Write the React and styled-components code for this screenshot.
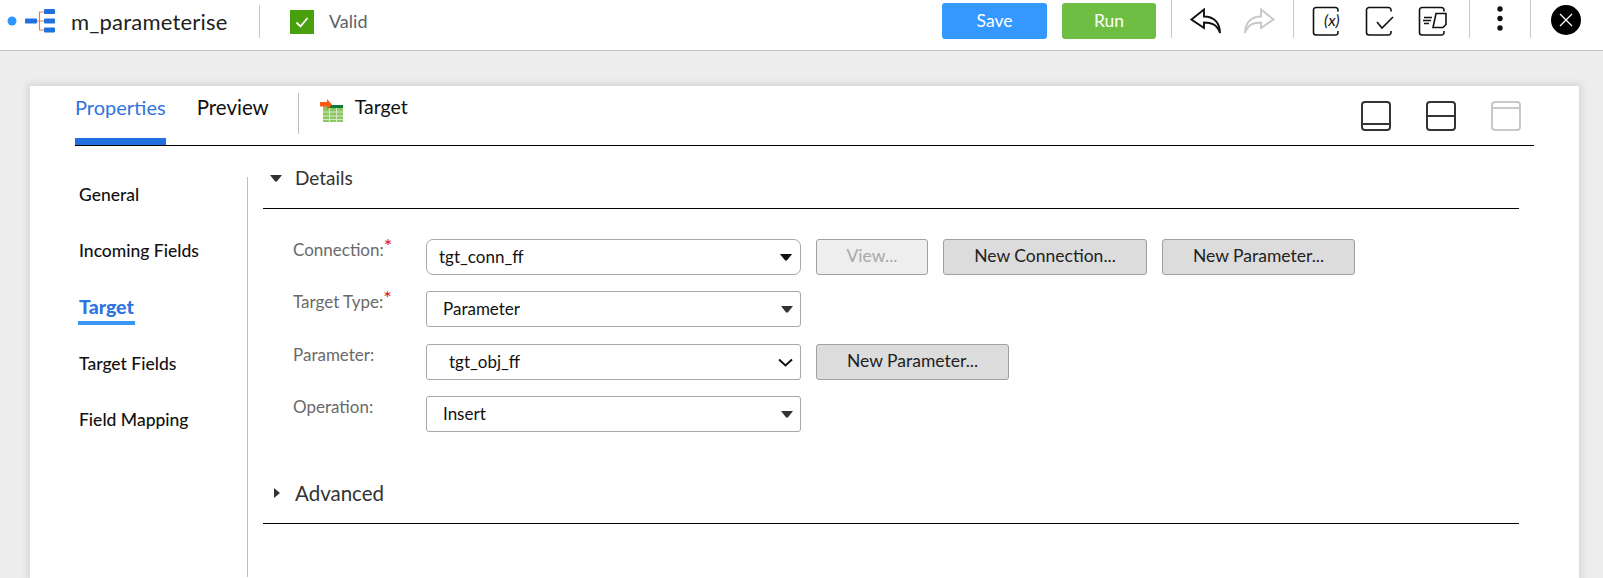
import React from "react";
import styled, { createGlobalStyle } from "styled-components";

const Global = createGlobalStyle`
  html, body { margin: 0; padding: 0; background: #ededed; }
  body { font-family: "Lato", "Open Sans", sans-serif; height: 578px; overflow: hidden; }
  * { box-sizing: border-box; }
`;

const Page = styled.div`
  width: 1603px;
  height: 578px;
  overflow: hidden;
  background: #ededed;
`;

const Header = styled.header`
  height: 51px;
  padding-right: 22px;
  background: #fff;
  border-bottom: 1px solid #c4c4c4;
  display: flex;
  align-items: flex-start;
`;

const Brand = styled.div`
  width: 259px;
  height: 50px;
  padding: 0 0 8px 7px;
  display: flex;
  align-items: center;
  gap: 5px;
`;

const Title = styled.h1`
  margin: 0 0 0 10px;
  font-size: 22px;
  font-weight: 400;
  color: #222;
  letter-spacing: 0.2px;
`;

const HeaderRule = styled.div`
  width: 1px;
  height: ${(p) => p.$h || 38}px;
  margin-top: ${(p) => p.$top || 0}px;
  background: #c8c8c8;
  flex: none;
`;

const Status = styled.div`
  display: flex;
  align-items: center;
  height: 44px;
  margin-left: 30px;
  flex: 1;
`;

const CheckBox = styled.span`
  width: 24px;
  height: 24px;
  background: #48a00e;
  display: flex;
  align-items: center;
  justify-content: center;
`;

const StatusText = styled.span`
  margin-left: 15px;
  padding-bottom: 2px;
  font-size: 18px;
  color: #5a6268;
`;

const ActionButton = styled.button`
  width: ${(p) => p.$w}px;
  height: 36px;
  margin: 3px ${(p) => p.$mr}px 0 0;
  padding: 0 0 2px;
  border: none;
  border-radius: 3px;
  background: ${(p) => p.$bg};
  color: #fff;
  font: 400 17.5px "Lato", sans-serif;
`;

const IconGroup = styled.div`
  display: flex;
  align-items: flex-start;
  gap: ${(p) => p.$gap}px;
  padding: ${(p) => p.$top}px ${(p) => p.$right}px 0 ${(p) => p.$left}px;
`;

const CloseButton = styled.div`
  width: 30px;
  height: 30px;
  margin: 5px 0 0 20px;
  border-radius: 50%;
  background: #000;
  display: flex;
  align-items: center;
  justify-content: center;
`;

const Main = styled.main`
  padding: 35px 24px 0 30px;
`;

const Panel = styled.section`
  width: 1549px;
  height: 492px;
  background: #fff;
  box-shadow: 0 0 6px 3px #d9d9d9;
  padding: 0 45px;
`;

const TabBar = styled.div`
  height: 60px;
  border-bottom: 1px solid #000;
  display: flex;
  align-items: flex-start;
`;

const Tab = styled.div`
  height: 59px;
  padding-top: 8px;
  margin-right: ${(p) => p.$mr}px;
  font-size: ${(p) => p.$size || 20}px;
  line-height: 26px;
  color: ${(p) => (p.$active ? "#2f74e0" : "#111")};
  border-bottom: 7px solid ${(p) => (p.$active ? "#2070e0" : "transparent")};
`;

const TabRule = styled.div`
  width: 1px;
  height: 41px;
  margin: 7px 21px 0 0;
  background: #bdbdbd;
`;

const ObjectLabel = styled.div`
  flex: 1;
  display: flex;
  align-items: flex-start;
  gap: 12px;
  padding-top: 11px;
  font-size: 19.5px;
  line-height: 19px;
  color: #111;
`;

const PaneIcons = styled.div`
  display: flex;
  gap: 35px;
  padding: 15px 13px 0 0;
`;

const Body = styled.div`
  display: flex;
  height: 431px;
`;

const SideNav = styled.nav`
  width: 172px;
  padding: 37px 0 0 4px;
  display: flex;
  flex-direction: column;
  flex: none;
`;

const NavItem = styled.div`
  height: 56.2px;
  flex: none;
  font-size: ${(p) => (p.$active ? 19.5 : 17.5)}px;
  font-weight: ${(p) => (p.$active ? 900 : 500)};
  color: ${(p) => (p.$active ? "#2f74e0" : "#111")};
  line-height: 24px;
  & > span {
    display: inline-block;
    padding: 0 ${(p) => (p.$active ? 1 : 0)}px 2px;
    margin-left: ${(p) => (p.$active ? -1 : 0)}px;
    border-bottom: ${(p) => (p.$active ? "4px solid #3a96f5" : "none")};
  }
`;

const Content = styled.div`
  flex: 1;
  margin-top: 31px;
  border-left: 1px solid #bdbdbd;
  padding-left: 15px;
`;

const SectionHead = styled.div`
  width: 1256px;
  height: ${(p) => p.$h}px;
  margin-top: ${(p) => p.$top}px;
  border-bottom: 1px solid #000;
  display: flex;
  align-items: flex-start;
  font-size: ${(p) => p.$size}px;
  line-height: 26px;
  color: #333;
`;

const CaretSlot = styled.span`
  width: 32px;
  height: 26px;
  display: flex;
  align-items: center;
  padding-left: ${(p) => p.$pad}px;
`;

const Form = styled.div`
  padding: 30px 0 0 30px;
  height: 253px;
  display: flex;
  flex-direction: column;
`;

const Row = styled.div`
  display: flex;
  height: 36px;
  margin-bottom: ${(p) => p.$after || 0}px;
`;

const Label = styled.label`
  width: 133px;
  font-size: 17px;
  line-height: 22px;
  color: #6a6a6a;
  flex: none;
`;

const Required = styled.span`
  color: #e01010;
  font-size: 20px;
  line-height: 16px;
  position: relative;
  top: -3px;
`;

const Select = styled.div`
  width: 375px;
  height: 36px;
  border: 1px solid #a8a8a8;
  border-radius: ${(p) => (p.$round ? 7 : 3)}px;
  padding: 0 7px 0 ${(p) => p.$pl}px;
  display: flex;
  align-items: center;
  justify-content: space-between;
  font-size: 17px;
  color: #111;
  flex: none;
`;

const SelectValue = styled.span`
  padding-bottom: 2px;
`;

const Button = styled.button`
  width: ${(p) => p.$w}px;
  height: 36px;
  margin-left: ${(p) => p.$ml}px;
  border: 1px solid #a0a0a0;
  border-radius: 3px;
  background: ${(p) => (p.$off ? "#eeeeee" : "#dcdcdc")};
  color: ${(p) => (p.$off ? "#a8a8a8" : "#222")};
  font: 400 17.5px "Lato", sans-serif;
  padding: 0 0 3px;
  flex: none;
`;

const Dot = () => (
  <svg width="10" height="10" viewBox="0 0 10 10"><circle cx="5" cy="5" r="4.5" fill="#2f96ff" /></svg>
);

const TreeIcon = () => (
  <svg width="32" height="26" viewBox="0 0 32 26" style={{ marginLeft: 2 }}>
    <rect x="1" y="10.5" width="12" height="5" rx="1" fill="#2070e0" />
    <path d="M13 13h7M15.500 13V4h5M15.500 13v9h5" stroke="#f47a45" strokeWidth="1.2" fill="none" />
    <rect x="20" y="1" width="11" height="5" rx="1" fill="#2070e0" />
    <rect x="20" y="10.500" width="11" height="5" rx="1" fill="#2070e0" />
    <rect x="20" y="19.500" width="11" height="5" rx="1" fill="#2070e0" />
  </svg>
);

const Check = () => (
  <svg width="16" height="14" viewBox="0 0 16 14"><path d="M2.500 7.500 6.500 11.500 13.500 3" stroke="#fff" strokeWidth="1.800" fill="none" /></svg>
);

const Undo = () => (
  <svg width="32" height="26" viewBox="0 0 32 26" fill="none" stroke="#111" strokeWidth="1.900">
    <path d="M14 1.500 1.500 11.500 14 20v-5.500c7 0 13 1.500 16 10.500 0-9-5-16.500-16-16.500z" />
  </svg>
);

const Redo = () => (
  <svg width="32" height="26" viewBox="0 0 32 26" fill="none" stroke="#c8c8c8" strokeWidth="1.900" style={{ transform: "scaleX(-1)" }}>
    <path d="M14 1.500 1.500 11.500 14 20v-5.500c7 0 13 1.500 16 10.500 0-9-5-16.500-16-16.500z" />
  </svg>
);

const Frame = ({ children }) => (
  <svg width="30" height="30" viewBox="0 0 30 30" fill="none" stroke="#111" strokeWidth="1.600">
    <path d="M26 25v1.500a2.500 2.500 0 0 1-2.500 2.500H4a2.500 2.500 0 0 1-2.500-2.500V4A2.500 2.500 0 0 1 4 1.500h19.500A2.500 2.500 0 0 1 26 4v1.500" />
    {children}
  </svg>
);

const Kebab = () => (
  <svg width="8" height="26" viewBox="0 0 8 26"><circle cx="4" cy="3" r="2.700" fill="#111" /><circle cx="4" cy="12.500" r="2.700" fill="#111" /><circle cx="4" cy="22" r="2.700" fill="#111" /></svg>
);

const Cross = () => (
  <svg width="16" height="16" viewBox="0 0 16 16"><path d="M2 2 14 14M14 2 2 14" stroke="#fff" strokeWidth="1.300" /></svg>
);

const TargetIcon = () => (
  <svg width="23" height="23" viewBox="0 0 23 23" style={{ marginTop: 2 }}>
    <rect x="3" y="7" width="20" height="16" fill="#8cc665" />
    <rect x="9" y="6" width="14" height="3" fill="#0f7a38" />
    <path d="M3 13h20M3 17h20M3 20.500h20" stroke="#d4ebc2" strokeWidth="1" />
    <path d="M9.500 9v14M16.500 9v14" stroke="#d4ebc2" strokeWidth="1" />
    <path d="M0 3h7V0L12 5.500 7 11V7.500H0z" fill="#ff5a14" />
  </svg>
);

const Pane = ({ color = "#333", y }) => (
  <svg width="30" height="30" viewBox="0 0 30 30" fill="none" stroke={color} strokeWidth="2">
    <rect x="1" y="1" width="28" height="28" rx="3" />
    <path d={`M1 ${y}H29`} />
  </svg>
);

const CaretDown = ({ w = 14, h = 8, color = "#222" }) => (
  <svg width={w} height={h} viewBox="0 0 14 8"><path d="M0 0H14L8 7.500H6z" fill={color} /></svg>
);

const Chevron = () => (
  <svg width="15" height="9" viewBox="0 0 15 9" fill="none"><path d="M1 1.500 7.500 7.500 14 1.500" stroke="#111" strokeWidth="2" /></svg>
);

const CaretRight = () => (
  <svg width="6" height="10" viewBox="0 0 6 10"><path d="M0 0 6 5 0 10z" fill="#333" /></svg>
);

export default function App() {
  return (
    <Page>
      <Global />
      <Header>
        <Brand>
          <Dot />
          <TreeIcon />
          <Title>m_parameterise</Title>
        </Brand>
        <HeaderRule $top={5} $h={33} />
        <Status>
          <CheckBox><Check /></CheckBox>
          <StatusText>Valid</StatusText>
        </Status>
        <ActionButton $w={105} $mr={15} $bg="#3598ff">Save</ActionButton>
        <ActionButton $w={94} $mr={15} $bg="#6fbe44">Run</ActionButton>
        <HeaderRule />
        <IconGroup $gap={21} $top={8} $left={18} $right={18}>
          <Undo />
          <Redo />
        </IconGroup>
        <HeaderRule />
        <IconGroup $gap={23} $top={6} $left={18} $right={21}>
          <Frame>
            <text x="12" y="20" fontFamily="Lato, sans-serif" fontStyle="italic" fontSize="16" fill="#111" stroke="none">(x)</text>
          </Frame>
          <Frame>
            <path d="M12 16l5 6 11-11" />
          </Frame>
          <Frame>
            <path d="M6 11.500h8M5 14.500h8M6 17.500h5" />
            <path d="M18 7.500h10v11l-3 3H15z" />
          </Frame>
        </IconGroup>
        <HeaderRule />
        <IconGroup $gap={0} $top={6} $left={26} $right={26}>
          <Kebab />
        </IconGroup>
        <HeaderRule />
        <CloseButton><Cross /></CloseButton>
      </Header>
      <Main>
        <Panel>
          <TabBar>
            <Tab $active $mr={31}>Properties</Tab>
            <Tab $size={20.5} $mr={29}>Preview</Tab>
            <TabRule />
            <ObjectLabel>
              <TargetIcon />
              Target
            </ObjectLabel>
            <PaneIcons>
              <Pane y={23} />
              <Pane y={15} />
              <Pane y={7} color="#c8c8c8" />
            </PaneIcons>
          </TabBar>
          <Body>
            <SideNav>
              <NavItem><span>General</span></NavItem>
              <NavItem><span>Incoming Fields</span></NavItem>
              <NavItem $active><span>Target</span></NavItem>
              <NavItem><span>Target Fields</span></NavItem>
              <NavItem><span>Field Mapping</span></NavItem>
            </SideNav>
            <Content>
              <SectionHead $h={44} $top={-12} $size={19}>
                <CaretSlot $pad={7}><CaretDown w={12} h={7} color="#333" /></CaretSlot>
                Details
              </SectionHead>
              <Form>
                <Row $after={16}>
                  <Label>Connection:<Required>*</Required></Label>
                  <Select $round $pl={12}><SelectValue>tgt_conn_ff</SelectValue><CaretDown w={14} h={7} color="#111" /></Select>
                  <Button $off $w={112} $ml={15}>View...</Button>
                  <Button $w={204} $ml={15}>New Connection...</Button>
                  <Button $w={193} $ml={15}>New Parameter...</Button>
                </Row>
                <Row $after={17}>
                  <Label>Target Type:<Required>*</Required></Label>
                  <Select $pl={16}><SelectValue>Parameter</SelectValue><CaretDown w={12} h={7} color="#333" /></Select>
                </Row>
                <Row $after={16}>
                  <Label>Parameter:</Label>
                  <Select $pl={22}><SelectValue>tgt_obj_ff</SelectValue><Chevron /></Select>
                  <Button $w={193} $ml={15}>New Parameter...</Button>
                </Row>
                <Row>
                  <Label>Operation:</Label>
                  <Select $pl={16}><SelectValue>Insert</SelectValue><CaretDown w={12} h={7} color="#333" /></Select>
                </Row>
              </Form>
              <SectionHead $h={44} $top={18} $size={20.5}>
                <CaretSlot $pad={11}><CaretRight /></CaretSlot>
                Advanced
              </SectionHead>
            </Content>
          </Body>
        </Panel>
      </Main>
    </Page>
  );
}
